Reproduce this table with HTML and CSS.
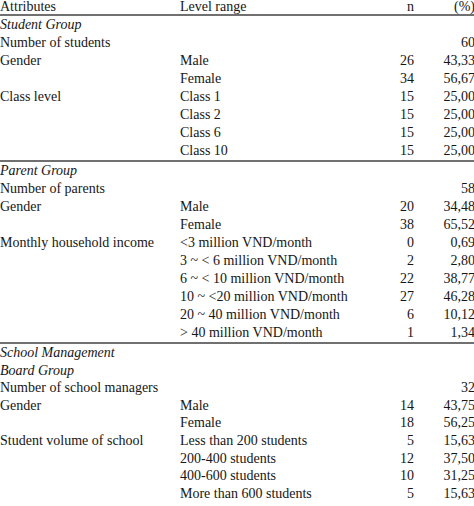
FILE: index.html
```html
<!DOCTYPE html>
<html>
<head>
<meta charset="utf-8">
<link rel="stylesheet" href="styles.css">
</head>
<body>
<div class="table">
  <div class="row head">
    <div class="c1">Attributes</div><div class="c2">Level range</div><div class="c3">n</div><div class="c4">(%)</div>
  </div>

  <div class="group g-student">
    <div class="row"><div class="c1 title">Student Group</div></div>
    <div class="row"><div class="c1">Number of students</div><div class="c2"></div><div class="c3"></div><div class="c4">60</div></div>
    <div class="row"><div class="c1">Gender</div><div class="c2">Male</div><div class="c3">26</div><div class="c4">43,33</div></div>
    <div class="row"><div class="c1"></div><div class="c2">Female</div><div class="c3">34</div><div class="c4">56,67</div></div>
    <div class="row"><div class="c1">Class level</div><div class="c2">Class 1</div><div class="c3">15</div><div class="c4">25,00</div></div>
    <div class="row"><div class="c1"></div><div class="c2">Class 2</div><div class="c3">15</div><div class="c4">25,00</div></div>
    <div class="row"><div class="c1"></div><div class="c2">Class 6</div><div class="c3">15</div><div class="c4">25,00</div></div>
    <div class="row"><div class="c1"></div><div class="c2">Class 10</div><div class="c3">15</div><div class="c4">25,00</div></div>
  </div>

  <div class="group g-parent">
    <div class="row"><div class="c1 title">Parent Group</div></div>
    <div class="row"><div class="c1">Number of parents</div><div class="c2"></div><div class="c3"></div><div class="c4">58</div></div>
    <div class="row"><div class="c1">Gender</div><div class="c2">Male</div><div class="c3">20</div><div class="c4">34,48</div></div>
    <div class="row"><div class="c1"></div><div class="c2">Female</div><div class="c3">38</div><div class="c4">65,52</div></div>
    <div class="row"><div class="c1">Monthly household income</div><div class="c2">&lt;3 million VND/month</div><div class="c3">0</div><div class="c4">0,69</div></div>
    <div class="row"><div class="c1"></div><div class="c2">3 ~ &lt; 6 million VND/month</div><div class="c3">2</div><div class="c4">2,80</div></div>
    <div class="row"><div class="c1"></div><div class="c2">6 ~ &lt; 10 million VND/month</div><div class="c3">22</div><div class="c4">38,77</div></div>
    <div class="row"><div class="c1"></div><div class="c2">10 ~ &lt;20 million VND/month</div><div class="c3">27</div><div class="c4">46,28</div></div>
    <div class="row"><div class="c1"></div><div class="c2">20 ~ 40 million VND/month</div><div class="c3">6</div><div class="c4">10,12</div></div>
    <div class="row"><div class="c1"></div><div class="c2">&gt; 40 million VND/month</div><div class="c3">1</div><div class="c4">1,34</div></div>
  </div>

  <div class="group g-school">
    <div class="row"><div class="c1 title">School Management</div></div>
    <div class="row"><div class="c1 title">Board Group</div></div>
    <div class="row"><div class="c1">Number of school managers</div><div class="c2"></div><div class="c3"></div><div class="c4">32</div></div>
    <div class="row"><div class="c1">Gender</div><div class="c2">Male</div><div class="c3">14</div><div class="c4">43,75</div></div>
    <div class="row"><div class="c1"></div><div class="c2">Female</div><div class="c3">18</div><div class="c4">56,25</div></div>
    <div class="row"><div class="c1">Student volume of school</div><div class="c2">Less than 200 students</div><div class="c3">5</div><div class="c4">15,63</div></div>
    <div class="row"><div class="c1"></div><div class="c2">200-400 students</div><div class="c3">12</div><div class="c4">37,50</div></div>
    <div class="row"><div class="c1"></div><div class="c2">400-600 students</div><div class="c3">10</div><div class="c4">31,25</div></div>
    <div class="row"><div class="c1"></div><div class="c2">More than 600 students</div><div class="c3">5</div><div class="c4">15,63</div></div>
  </div>
</div>
</body>
</html>
```
FILE: styles.css
```css
html, body {
  margin: 0;
  padding: 0;
  background: #ffffff;
  overflow: hidden;
}
body {
  width: 474px;
  height: 506px;
  font-family: "Liberation Serif", "Times New Roman", serif;
  font-size: 14px;
  color: #161616;
}
.table {
  width: 475px;
}
.row {
  display: grid;
  grid-template-columns: 180px 196px 38px 61px;
  height: 18px;
  line-height: 18px;
  white-space: nowrap;
}
.head {
  height: 14px;
  line-height: 13px;
  border-bottom: 2px solid #707070;
}
.group {
  border-bottom: 2px solid #707070;
}
.g-school {
  border-bottom: none;
}
.g-school .row {
  height: 17.6px;
  line-height: 17.6px;
}
.c1, .c2 {
  text-align: left;
}
.c3, .c4 {
  text-align: right;
}
.title {
  font-style: italic;
  grid-column: 1 / 5;
}
```
